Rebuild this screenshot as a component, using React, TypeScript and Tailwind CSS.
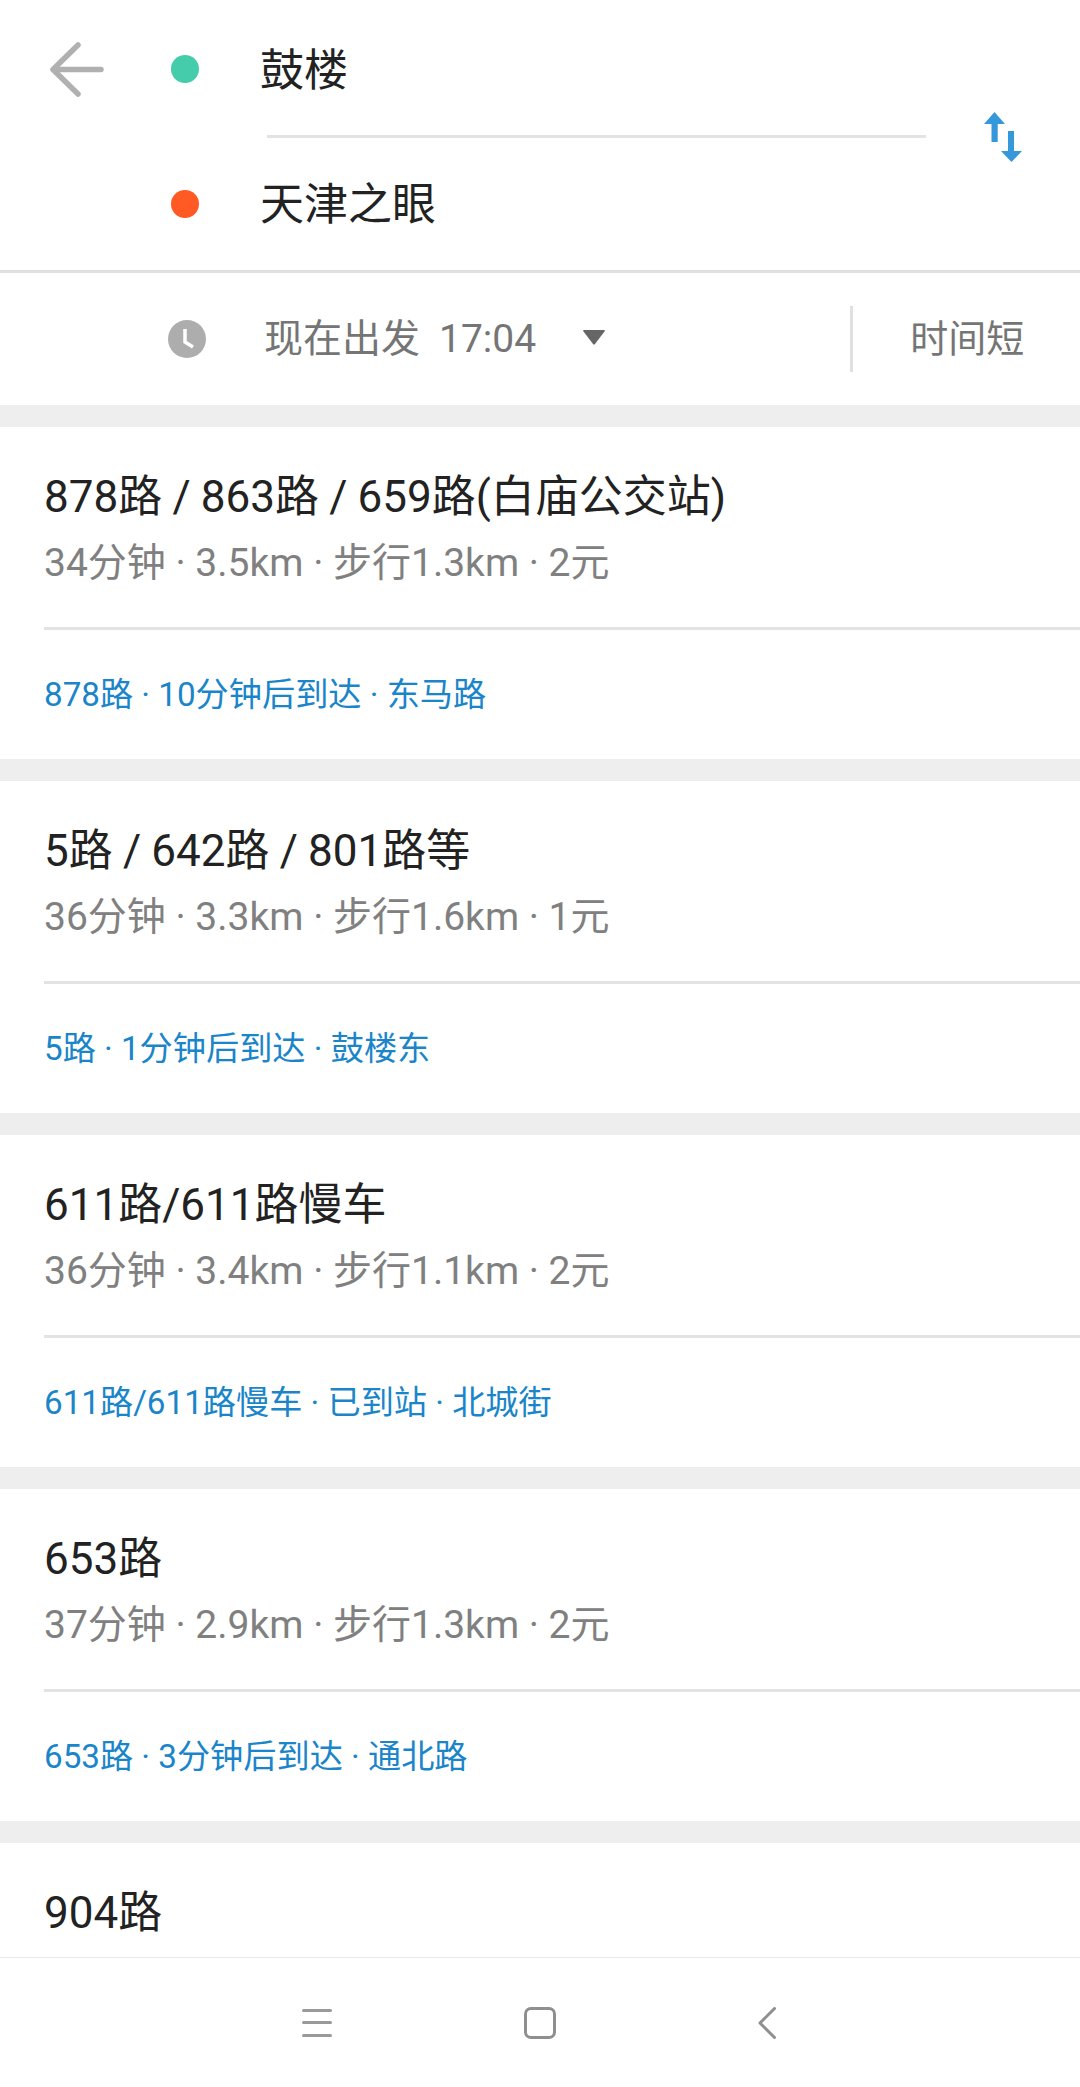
const routes = [
  { title: "878路 / 863路 / 659路(白庙公交站)", meta: "34分钟 · 3.5km · 步行1.3km · 2元", live: "878路 · 10分钟后到达 · 东马路" },
  { title: "5路 / 642路 / 801路等", meta: "36分钟 · 3.3km · 步行1.6km · 1元", live: "5路 · 1分钟后到达 · 鼓楼东" },
  { title: "611路/611路慢车", meta: "36分钟 · 3.4km · 步行1.1km · 2元", live: "611路/611路慢车 · 已到站 · 北城街" },
  { title: "653路", meta: "37分钟 · 2.9km · 步行1.3km · 2元", live: "653路 · 3分钟后到达 · 通北路" },
  { title: "904路" },
];

function RouteCard({ title, meta, live }: { title: string; meta?: string; live?: string }) {
  return (
    <section className="mt-[22px] h-[332px] shrink-0 bg-white pl-[44px]">
      <div className="flex h-[200px] flex-col pt-[40px]">
        <div className="h-[60px] text-[44px] leading-[60px] whitespace-nowrap text-[#222222] [word-spacing:-0.7px]">{title}</div>
        {meta && <div className="mt-[6px] h-[60px] text-[39px] leading-[60px] whitespace-nowrap text-[#808080]">{meta}</div>}
      </div>
      {live && <div className="h-[3px] bg-[#e3e3e3]" />}
      {live && <div className="flex h-[129px] items-center text-[33.2px] whitespace-nowrap text-[#1a85c9]">{live}</div>}
    </section>
  );
}

export default function App() {
  return (
    <div className="flex h-[2087px] w-[1080px] flex-col overflow-hidden bg-[#eeeeee] font-[Roboto,'Noto_Sans_CJK_SC',sans-serif]">
      <main className="min-h-0 flex-1 overflow-hidden">
        <header className="flex h-[273px] border-b-[3px] border-[#e0e0e0] bg-white">
          <div className="flex w-[926px] flex-col">
            <div className="flex h-[135px] items-center pt-[3px] pl-[50px]">
              <svg width="54" height="55" viewBox="0 0 54 55" fill="none" stroke="#b0b0b0" strokeWidth="5.5" strokeLinecap="round" strokeLinejoin="round">
                <path d="M51 27.5H3M28 3 3 27.5 28 52" />
              </svg>
              <span className="ml-[67px] h-[28px] w-[28px] rounded-full bg-[#45ccab]" />
              <span className="mt-[3px] ml-[61px] text-[44px] text-[#222222]">鼓楼</span>
            </div>
            <div className="ml-[267px] h-[3px] bg-[#e3e3e3]" />
            <div className="flex h-[132px] items-center pl-[171px]">
              <span className="h-[28px] w-[28px] rounded-full bg-[#ff5a23]" />
              <span className="mt-[2px] ml-[61px] text-[44px] text-[#222222]">天津之眼</span>
            </div>
          </div>
          <div className="flex items-center pt-[4px] pl-[58px]">
            <svg width="38" height="50" viewBox="0 0 38 50" fill="#3498db">
              <path d="M10.5 0 21 12H13.7V30H7.5V12H0Z" />
              <path d="M24 19H30V39H38L27.5 50 17 39H24Z" />
            </svg>
          </div>
        </header>

        <div className="flex h-[132px] items-center bg-white pl-[168px]">
          <svg width="38" height="38" viewBox="0 0 38 38">
            <circle cx="19" cy="19" r="19" fill="#adadad" />
            <path d="M17 9V22L25 27" fill="none" stroke="#ffffff" strokeWidth="3.5" />
          </svg>
          <span className="ml-[58px] text-[39px] whitespace-nowrap text-[#757575]">现在出发</span>
          <span className="ml-[19px] text-[39px] text-[#757575]">17:04</span>
          <svg className="mb-[3px] ml-[47px]" width="22" height="15" viewBox="0 0 22 15" fill="#666666">
            <path d="M1 0H21Q22.500 0 21.500 1.500L12 14Q11 15 10 14L.5 1.500Q-.5 0 1 0Z" />
          </svg>
          <div className="ml-[245px] h-[66px] w-[3px] bg-[#e0e0e0]" />
          <span className="ml-[57px] text-[38px] whitespace-nowrap text-[#757575]">时间短</span>
        </div>

        {routes.map((r) => (
          <RouteCard key={r.title} {...r} />
        ))}
      </main>

      <nav className="flex h-[130px] shrink-0 items-center border-t border-[#e8e8e8] bg-white pl-[302px]">
        <div className="flex h-[28px] w-[30px] flex-col justify-between">
          <div className="h-[3px] rounded-sm bg-[#999999]" />
          <div className="h-[3px] rounded-sm bg-[#999999]" />
          <div className="h-[3px] rounded-sm bg-[#999999]" />
        </div>
        <div className="ml-[192px] h-[32px] w-[32px] rounded-[7px] border-[3px] border-[#8f8f8f]" />
        <svg className="ml-[202px]" width="18" height="32" viewBox="0 0 18 32" fill="none" stroke="#8f8f8f" strokeWidth="3" strokeLinecap="round" strokeLinejoin="round">
          <path d="M16.500 1.500 2 16 16.500 30.500" />
        </svg>
      </nav>
    </div>
  );
}
